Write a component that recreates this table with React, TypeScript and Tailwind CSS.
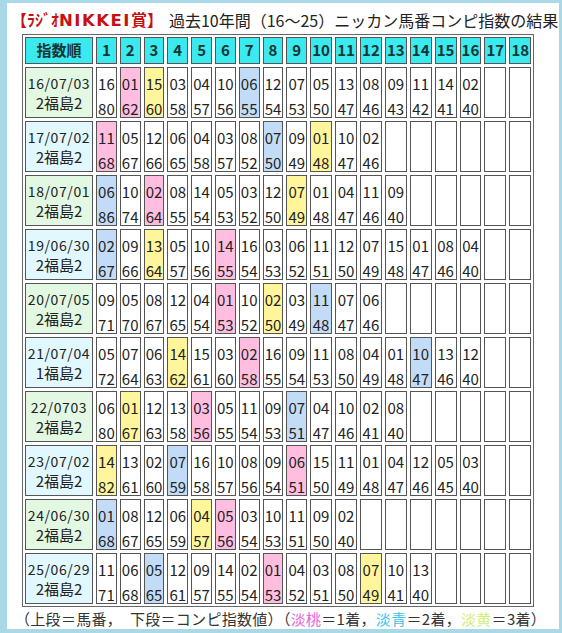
import React from "react";

type Row = { date: string; place: string; top: string[]; bottom: string[]; colors: Record<number, "p" | "b" | "y"> };

const rows: Row[] = [
  { date: "16/07/03", place: "2福島2", top: "16 01 15 03 04 10 06 12 07 05 13 08 09 11 14 02".split(" "), bottom: "80 62 60 58 57 56 55 54 53 50 47 46 43 42 41 40".split(" "), colors: { 1: "p", 2: "y", 6: "b" } },
  { date: "17/07/02", place: "2福島2", top: "11 05 12 06 04 03 08 07 09 01 10 02".split(" "), bottom: "68 67 66 65 58 57 52 50 49 48 47 46".split(" "), colors: { 0: "p", 7: "b", 9: "y" } },
  { date: "18/07/01", place: "2福島2", top: "06 10 02 08 14 05 03 12 07 01 04 11 09".split(" "), bottom: "86 74 64 55 54 53 52 50 49 48 47 46 40".split(" "), colors: { 0: "b", 2: "p", 8: "y" } },
  { date: "19/06/30", place: "2福島2", top: "02 09 13 05 10 14 16 03 06 11 12 07 15 01 08 04".split(" "), bottom: "67 66 64 57 56 55 54 53 52 51 50 49 48 47 46 40".split(" "), colors: { 0: "b", 2: "y", 5: "p" } },
  { date: "20/07/05", place: "2福島2", top: "09 05 08 12 04 01 10 02 03 11 07 06".split(" "), bottom: "71 70 67 65 54 53 52 50 49 48 47 46".split(" "), colors: { 5: "p", 7: "y", 9: "b" } },
  { date: "21/07/04", place: "1福島2", top: "05 07 06 14 15 03 02 16 09 11 08 04 01 10 13 12".split(" "), bottom: "72 64 63 62 61 60 58 55 54 53 50 49 48 47 46 40".split(" "), colors: { 3: "y", 6: "p", 13: "b" } },
  { date: "22/0703", place: "2福島2", top: "06 01 12 13 03 05 11 09 07 04 10 02 08".split(" "), bottom: "80 67 63 58 56 55 54 53 51 47 46 41 40".split(" "), colors: { 1: "y", 4: "p", 8: "b" } },
  { date: "23/07/02", place: "2福島2", top: "14 13 02 07 16 10 08 09 06 15 11 01 04 12 05 03".split(" "), bottom: "82 61 60 59 58 57 56 54 51 50 49 48 47 46 45 40".split(" "), colors: { 0: "y", 3: "b", 8: "p" } },
  { date: "24/06/30", place: "2福島2", top: "01 08 12 06 04 05 03 10 11 09 02".split(" "), bottom: "68 67 65 59 57 56 54 53 51 50 40".split(" "), colors: { 0: "b", 4: "y", 5: "p" } },
  { date: "25/06/29", place: "2福島2", top: "11 06 05 12 09 14 02 01 04 03 08 07 10 13".split(" "), bottom: "71 68 65 61 57 55 54 53 52 51 50 49 41 40".split(" "), colors: { 2: "b", 7: "p", 11: "y" } },
];

const cellBg = (c?: "p" | "b" | "y") =>
  c === "p" ? "bg-[#ffbedf]" : c === "b" ? "bg-[#c2dcf8]" : c === "y" ? "bg-[#fff69c]" : "bg-white";

const headers = Array.from({ length: 18 }, (_, i) => String(i + 1));

export default function App() {
  return (
    <div className="w-[562px] h-[633px] bg-[#a9d8e6] pl-[7px] pt-[3px] pr-[3px] pb-[4px] font-['Noto_Sans_CJK_JP',sans-serif] text-[#222]">
      <div className="h-full bg-white flex flex-col">
        <div className="h-[33px] flex items-center pt-[3px] pl-[4px] text-[16px] leading-none whitespace-nowrap">
          <span className="font-bold text-[#c81010] flex items-baseline">
            <span>【ﾗｼﾞｵ</span>
            <span className="font-['DejaVu_Sans',sans-serif] text-[16.5px] tracking-[1.5px]">NIKKEI</span>
            <span>賞】</span>
          </span>
          <span className="ml-[6px] text-[#222]">過去10年間（16～25）ニッカン馬番コンピ指数の結果</span>
        </div>
        <div className="ml-[15px] w-[512px] border border-[#666] p-[2px]">
          <div className="grid grid-cols-[68px_repeat(9,20.8px)_repeat(9,21.9px)] gap-[3px]">
            <div className="h-[27px] border border-[#555] bg-[#3aeaee] flex items-center justify-center font-bold text-[15px] text-[#173535]">
              指数順
            </div>
            {headers.map((h) => (
              <div key={h} className="h-[27px] border border-[#555] bg-[#3aeaee] flex items-center justify-center font-bold text-[15px] text-[#173535]">
                {h}
              </div>
            ))}
            {rows.map((r, ri) => (
              <React.Fragment key={r.date}>
                <div className={`h-[51px] border border-[#555] flex flex-col items-center justify-center text-[14px] leading-[19px] ${ri % 2 === 0 ? "bg-[#e2f8e2]" : "bg-[#e2f8ff]"}`}>
                  <span className="tracking-[0.6px]">{r.date}</span>
                  <span className="text-[15px]">{r.place}</span>
                </div>
                {headers.map((_, ci) => (
                  <div key={ci} className={`h-[51px] border border-[#555] flex flex-col items-center justify-start text-[15px] leading-[25px] pt-[3px] overflow-hidden ${cellBg(r.colors[ci])}`}>
                    <span>{r.top[ci] ?? ""}</span>
                    <span>{r.bottom[ci] ?? ""}</span>
                  </div>
                ))}
              </React.Fragment>
            ))}
          </div>
        </div>
        <div className="pl-[8px] pt-[2px] text-[15px] leading-[20px] tracking-[0.3px] whitespace-nowrap text-[#333]">
          （上段＝馬番，　下段＝コンピ指数値）（<span className="text-[#e866dc]">淡桃</span>＝1着，<span className="text-[#38c6ee]">淡青</span>＝2着，<span className="text-[#d6ec74]">淡黄</span>＝3着）
        </div>
      </div>
    </div>
  );
}
